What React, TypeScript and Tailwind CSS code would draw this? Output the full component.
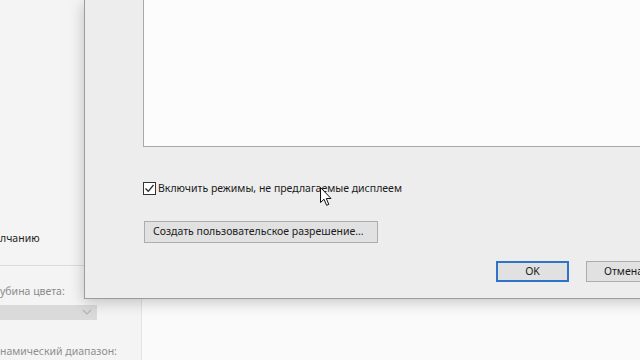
import React from "react";

export default function App() {
  const font = { fontFamily: '"Noto Sans", "Open Sans", sans-serif' };
  return (
    <div
      className="relative w-[640px] h-[360px] overflow-hidden bg-[#f9f9f9] text-[10.5px] text-[#1b1b1b]"
      style={font}
    >
      {/* background settings page */}
      <div className="flex h-full">
        <div className="flex w-[142px] flex-col border-r border-[#e3e3e3] bg-[#f4f4f4]">
          <div className="mt-[230px] h-[17px] whitespace-nowrap leading-[17px] text-[#1e1e1e]">лчанию</div>
          <div className="mt-[18px] h-px w-[120px] bg-[#dcdcdc]" />
          <div className="mt-[17px] h-[17px] whitespace-nowrap leading-[17px] text-[#8a8a8a]">убина цвета:</div>
          <div className="mt-[5px] flex h-[20px] w-[97px] items-center justify-end bg-[#dadada] pr-[5px]">
            <svg width="10" height="6" viewBox="0 0 10 6">
              <path d="M1 1 L5 5 L9 1" fill="none" stroke="#b5b5b5" strokeWidth="1.2" />
            </svg>
          </div>
          <div className="mt-[23px] h-[17px] whitespace-nowrap leading-[17px] text-[#8f8f8f]">намический диапазон:</div>
        </div>
        <div className="flex-1 bg-[#fafafa]" />
      </div>

      {/* dialog window */}
      <div className="absolute left-[84px] top-0 h-[299px] w-[600px] border-l border-b border-[#9c9c9c] bg-[#ededed] shadow-[0_3px_14px_rgba(0,0,0,0.22)]">
        <div className="flex flex-col pl-[58px]">
          <div className="h-[147px] border-l border-b border-[#a9a9a9] bg-[#fcfcfc]" />
          <div className="mt-[35px] flex h-[13px] items-center">
            <div className="flex h-[13px] w-[13px] shrink-0 items-center justify-center border border-[#333333] bg-white">
              <svg width="11" height="11" viewBox="0 0 11 11">
                <path d="M1.5 5.5 L4.3 8.3 L9.5 2" fill="none" stroke="#2a2a2a" strokeWidth="1.3" />
              </svg>
            </div>
            <span className="ml-[2px] whitespace-nowrap leading-[13px]">Включить режимы, не предлагаемые дисплеем</span>
          </div>
          <div className="mt-[26px] ml-px flex h-[22px] w-[234px] items-center whitespace-nowrap border border-[#adadad] bg-[#e1e1e1] pl-[8px]">
            Создать пользовательское разрешение...
          </div>
          <div className="mt-[18px] flex gap-[17px] pl-[353px]">
            <div className="flex h-[21px] w-[73px] items-center justify-center border-2 border-[#2f74c8] bg-[#e1e1e1]">
              OK
            </div>
            <div className="flex h-[21px] w-[75px] items-center justify-center whitespace-nowrap border border-[#adadad] bg-[#e1e1e1]">
              Отмена
            </div>
          </div>
        </div>
      </div>

      {/* mouse cursor */}
      <svg
        className="absolute left-[320px] top-[187px]"
        width="13"
        height="20"
        viewBox="0 0 13 20"
      >
        <path
          d="M0.5 0.5 L0.5 15.5 L4 12.2 L6.6 18.3 L8.8 17.4 L6.3 11.5 L11 11.5 Z"
          fill="#ffffff"
          stroke="#111111"
          strokeWidth="1"
          strokeLinejoin="round"
        />
      </svg>
    </div>
  );
}
